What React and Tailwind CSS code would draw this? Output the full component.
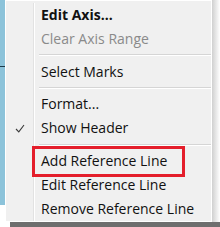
import React from 'react';

const Row = ({ children, muted, bold, check }) => (
  <div className="flex h-[24px] items-center">
    <div className="flex h-full w-[27px] shrink-0 items-center justify-center pl-[1px]">
      {check && (
        <svg width="10" height="9" viewBox="0 0 10 9" fill="none">
          <path d="M1 5 L3.8 7.8 L9 1" stroke="#3a3a3a" strokeWidth="1.1" />
        </svg>
      )}
    </div>
    <div className="h-full w-px bg-[#e2e2e2]" />
    <div className="h-full w-px bg-white" />
    <span
      className={`pl-[6px] text-[14px] leading-none whitespace-nowrap ${
        muted ? 'text-[#8a8a8a]' : 'text-[#111]'
      } ${bold ? 'font-bold' : ''}`}
    >
      {children}
    </span>
  </div>
);

const Sep = () => (
  <div className="flex h-[9px]">
    <div className="w-[27px] shrink-0" />
    <div className="h-full w-px bg-[#e2e2e2]" />
    <div className="h-full w-px bg-white" />
    <div className="flex flex-1 flex-col justify-center pl-[4px]">
      <div className="h-px bg-[#d5d5d5]" />
      <div className="h-px bg-white" />
    </div>
  </div>
);

export default function App() {
  return (
    <div
      className="flex h-[227px] w-[220px] flex-col overflow-hidden bg-white"
      style={{ fontFamily: '"Open Sans", "Noto Sans", sans-serif' }}
    >
      <div className="flex h-[222px]">
        {/* chart edge behind the menu */}
        <div className="flex w-[5px] shrink-0 flex-col">
          <div className="h-[205px] bg-[#8cc3da]">
            <div className="mt-[66px] h-px bg-[#1c3a4a]" />
          </div>
        </div>

        {/* context menu */}
        <div className="flex w-[207px] shrink-0 flex-col border border-white bg-[#f0f0f0] pt-[2px]">
          <Row bold>Edit Axis...</Row>
          <Row muted>Clear Axis Range</Row>
          <Sep />
          <Row>Select Marks</Row>
          <Sep />
          <Row>Format...</Row>
          <Row check>Show Header</Row>
          <Sep />
          <div className="relative">
            <Row>Add Reference Line</Row>
            <div className="absolute -top-[3px] -bottom-[4px] left-[26px] right-[26px] border-[3px] border-[#e41e2b]" />
          </div>
          <Row>Edit Reference Line</Row>
          <Row>Remove Reference Line</Row>
        </div>

        {/* right shadow */}
        <div className="w-[8px] shrink-0 bg-gradient-to-r from-[#d0d0d0] to-white" />
      </div>
      <div className="ml-[10px] h-[5px] bg-[#6e6e6e]" />
    </div>
  );
}
